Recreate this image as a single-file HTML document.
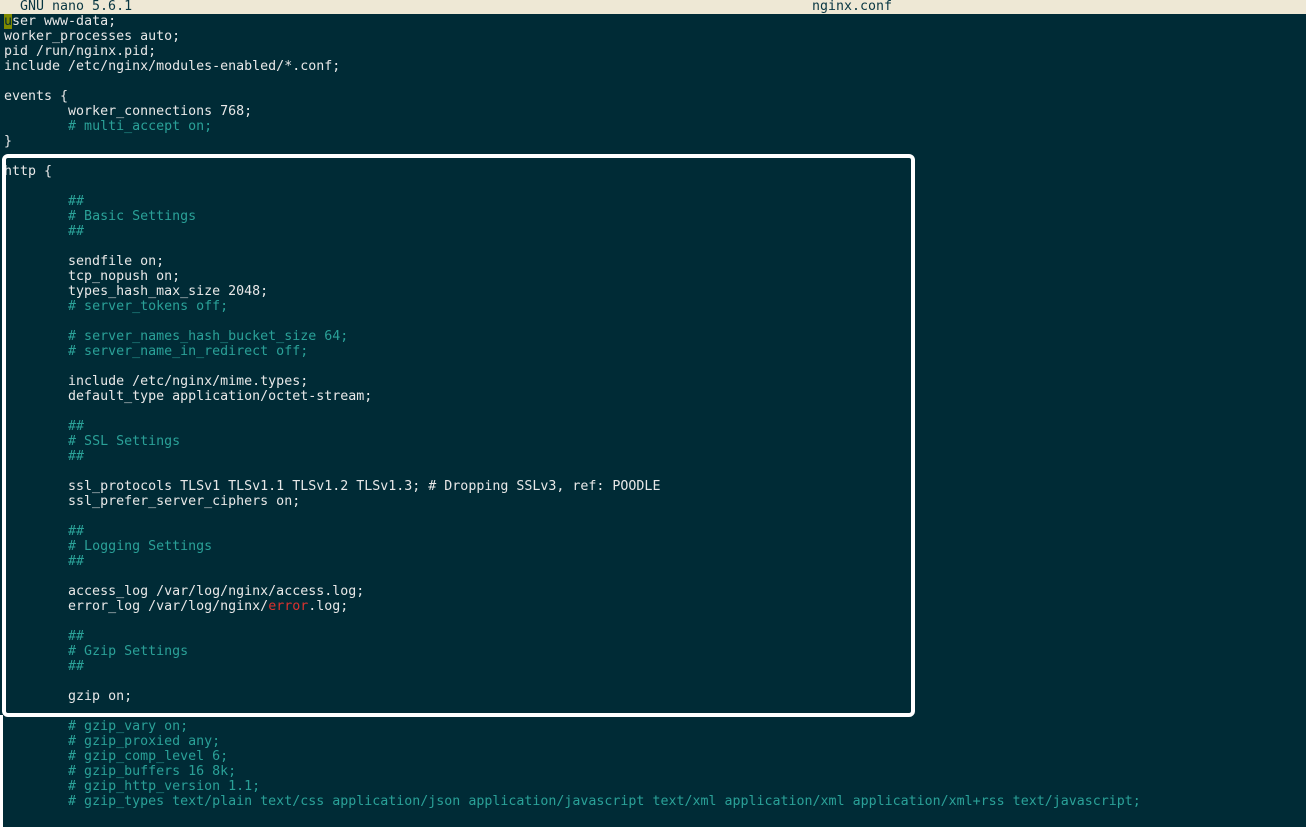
<!DOCTYPE html>
<html><head><meta charset="utf-8"><style>
html,body{margin:0;padding:0;width:1306px;height:827px;overflow:hidden;background:#002b36;}
body{position:relative;font-family:"DejaVu Sans Mono","Liberation Mono",monospace;font-size:13.3px;color:#e8e8e8;}
.title{position:absolute;left:0;top:0;width:1306px;height:14px;background:#eee8d5;color:#073642;line-height:14px;white-space:pre;}
.t1{position:absolute;left:20px;top:0;}
.t2{position:absolute;left:812px;top:0;}
pre{position:absolute;left:4px;top:14px;margin:0;font:inherit;line-height:15px;white-space:pre;}
.c{color:#2aa198}
.r{color:#dc322f}
.cur{background:#7e8a00;color:#002b36}
.box{position:absolute;left:2px;top:154px;width:905px;height:555px;border:4px solid #fff;border-radius:6px;}
.strip{position:absolute;left:0;top:715px;width:3px;height:112px;background:#fff;}
</style></head><body>
<div class="title"><span class="t1">GNU nano 5.6.1</span><span class="t2">nginx.conf</span></div>
<pre><span class="cur">u</span>ser www-data;
worker_processes auto;
pid /run/nginx.pid;
include /etc/nginx/modules-enabled/*.conf;

events {
        worker_connections 768;
        <span class="c"># multi_accept on;</span>
}

http {

        <span class="c">##</span>
        <span class="c"># Basic Settings</span>
        <span class="c">##</span>

        sendfile on;
        tcp_nopush on;
        types_hash_max_size 2048;
        <span class="c"># server_tokens off;</span>

        <span class="c"># server_names_hash_bucket_size 64;</span>
        <span class="c"># server_name_in_redirect off;</span>

        include /etc/nginx/mime.types;
        default_type application/octet-stream;

        <span class="c">##</span>
        <span class="c"># SSL Settings</span>
        <span class="c">##</span>

        ssl_protocols TLSv1 TLSv1.1 TLSv1.2 TLSv1.3; # Dropping SSLv3, ref: POODLE
        ssl_prefer_server_ciphers on;

        <span class="c">##</span>
        <span class="c"># Logging Settings</span>
        <span class="c">##</span>

        access_log /var/log/nginx/access.log;
        error_log /var/log/nginx/<span class="r">error</span>.log;

        <span class="c">##</span>
        <span class="c"># Gzip Settings</span>
        <span class="c">##</span>

        gzip on;

        <span class="c"># gzip_vary on;</span>
        <span class="c"># gzip_proxied any;</span>
        <span class="c"># gzip_comp_level 6;</span>
        <span class="c"># gzip_buffers 16 8k;</span>
        <span class="c"># gzip_http_version 1.1;</span>
        <span class="c"># gzip_types text/plain text/css application/json application/javascript text/xml application/xml application/xml+rss text/javascript;</span>
</pre>
<div class="box"></div>
<div class="strip"></div>
</body></html>
